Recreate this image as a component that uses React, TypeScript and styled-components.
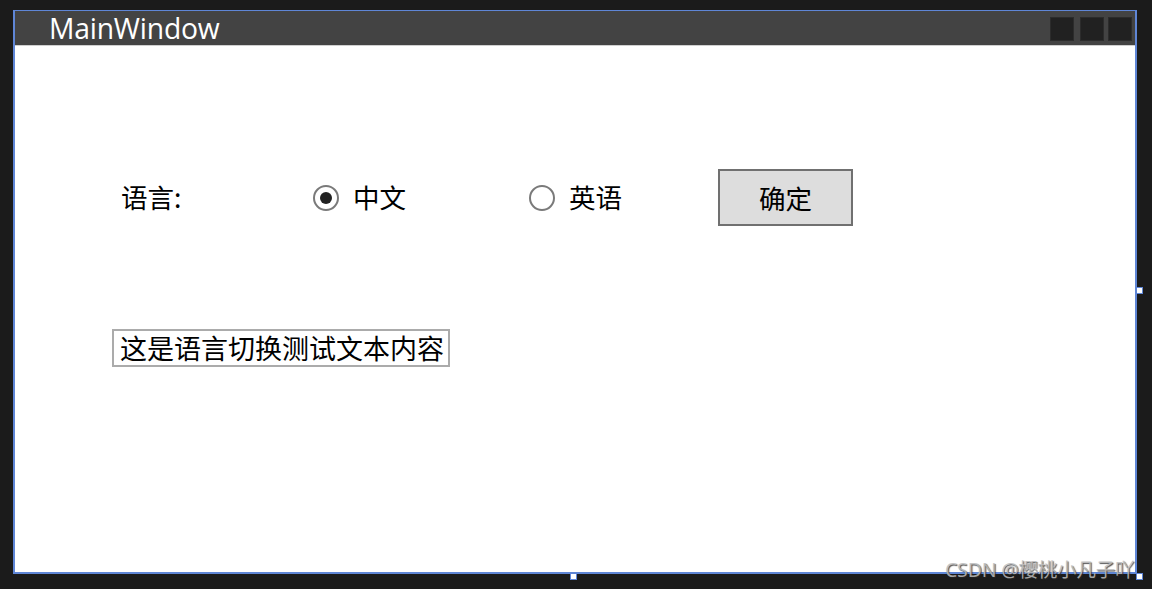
import React from "react";
import styled, { createGlobalStyle } from "styled-components";

const Global = createGlobalStyle`
  html, body { margin: 0; padding: 0; background: #1b1b1b; }
  body { width: 1152px; height: 589px; overflow: hidden; font-family: "Noto Sans", "Noto Sans CJK SC", sans-serif; }
  #root { position: relative; width: 1152px; height: 589px; }
`;

const Page = styled.div`
  position: relative;
  width: 1152px;
  height: 589px;
  padding: 10px 0 0 13px;
  box-sizing: border-box;
`;

const Window = styled.div`
  position: relative;
  width: 1124px;
  height: 564px;
  box-sizing: border-box;
  border: 2px solid #5f86d6;
  border-top-width: 1px;
  display: flex;
  flex-direction: column;
  background: #ffffff;
`;

const TitleBar = styled.div`
  height: 34px;
  background: #434343;
  border-bottom: 1px solid #cfcfcf;
  display: flex;
  align-items: center;
  padding-left: 34px;
  padding-right: 3px;
  flex-shrink: 0;
`;

const Title = styled.div`
  color: #ffffff;
  font-family: "Open Sans", "Noto Sans", sans-serif;
  font-size: 28.3px;
  line-height: 34px;
  letter-spacing: -0.2px;
  flex: 1;
  padding-bottom: 1px;
`;

const WinButton = styled.div<{ $ml: number }>`
  width: 24px;
  height: 24px;
  margin-left: ${(p) => p.$ml}px;
  background: #212121;
  box-sizing: border-box;
  border: 1px solid #2c2c2c;
  margin-top: 2px;
`;

const Content = styled.div`
  flex: 1;
  padding-left: 106px;
  font-family: "Noto Sans CJK SC", "Noto Sans", sans-serif;
  color: #000000;
`;

const Row = styled.div`
  margin-top: 123px;
  display: grid;
  grid-template-columns: 192px 216px 189px 135px;
  align-items: center;
  height: 57px;
`;

const Label = styled.div`
  font-size: 26.5px;
  line-height: 30px;
  margin-top: -2px;
`;

const Radio = styled.div`
  display: flex;
  align-items: center;
  gap: 14px;
  font-size: 26.5px;
  line-height: 30px;
  & > span {
    margin-top: -2px;
  }
`;

const Circle = styled.div<{ $checked?: boolean }>`
  width: 26px;
  height: 26px;
  box-sizing: border-box;
  border-radius: 50%;
  border: 2px solid #7a7a7a;
  background: #ffffff;
  display: flex;
  align-items: center;
  justify-content: center;
  &::after {
    content: "";
    display: ${(p) => (p.$checked ? "block" : "none")};
    width: 12px;
    height: 12px;
    border-radius: 50%;
    background: #222222;
  }
`;

const Button = styled.div`
  width: 135px;
  height: 57px;
  box-sizing: border-box;
  border: 2px solid #707070;
  background: #dddddd;
  display: flex;
  align-items: center;
  justify-content: center;
  font-size: 26.5px;
  line-height: 30px;
  padding-top: 1px;
`;

const TextBox = styled.div`
  margin-top: 103px;
  margin-left: -9px;
  display: inline-flex;
  align-items: center;
  height: 38px;
  box-sizing: border-box;
  border: 2px solid #ababab;
  padding: 0 4px 0 6px;
  font-size: 27px;
  line-height: 30px;
  white-space: nowrap;
`;

const Handle = styled.div<{ $x: number; $y: number }>`
  position: absolute;
  left: ${(p) => p.$x}px;
  top: ${(p) => p.$y}px;
  width: 7px;
  height: 7px;
  box-sizing: border-box;
  border: 1px solid #5f86d6;
  background: #ffffff;
`;

const Watermark = styled.div`
  position: absolute;
  left: 945px;
  top: 556px;
  font-family: "Noto Sans", "Noto Sans CJK SC", sans-serif;
  font-size: 19.5px;
  line-height: 28px;
  color: rgba(190, 190, 190, 0.85);
  text-shadow: 1px 1px 1px rgba(40, 40, 40, 0.8);
  white-space: nowrap;
  letter-spacing: -0.2px;
`;

export default function App() {
  return (
    <>
      <Global />
      <Page>
        <Window>
          <TitleBar>
            <Title>MainWindow</Title>
            <WinButton $ml={0} />
            <WinButton $ml={6} />
            <WinButton $ml={4} />
          </TitleBar>
          <Content>
            <Row>
              <Label>语言:</Label>
              <Radio>
                <Circle $checked />
                <span>中文</span>
              </Radio>
              <Radio>
                <Circle />
                <span>英语</span>
              </Radio>
              <Button>确定</Button>
            </Row>
            <TextBox>这是语言切换测试文本内容</TextBox>
          </Content>
        </Window>
        <Handle $x={1136} $y={287} />
        <Handle $x={570} $y={573} />
        <Handle $x={1136} $y={573} />
        <Watermark>CSDN @樱桃小凡子吖</Watermark>
      </Page>
    </>
  );
}
